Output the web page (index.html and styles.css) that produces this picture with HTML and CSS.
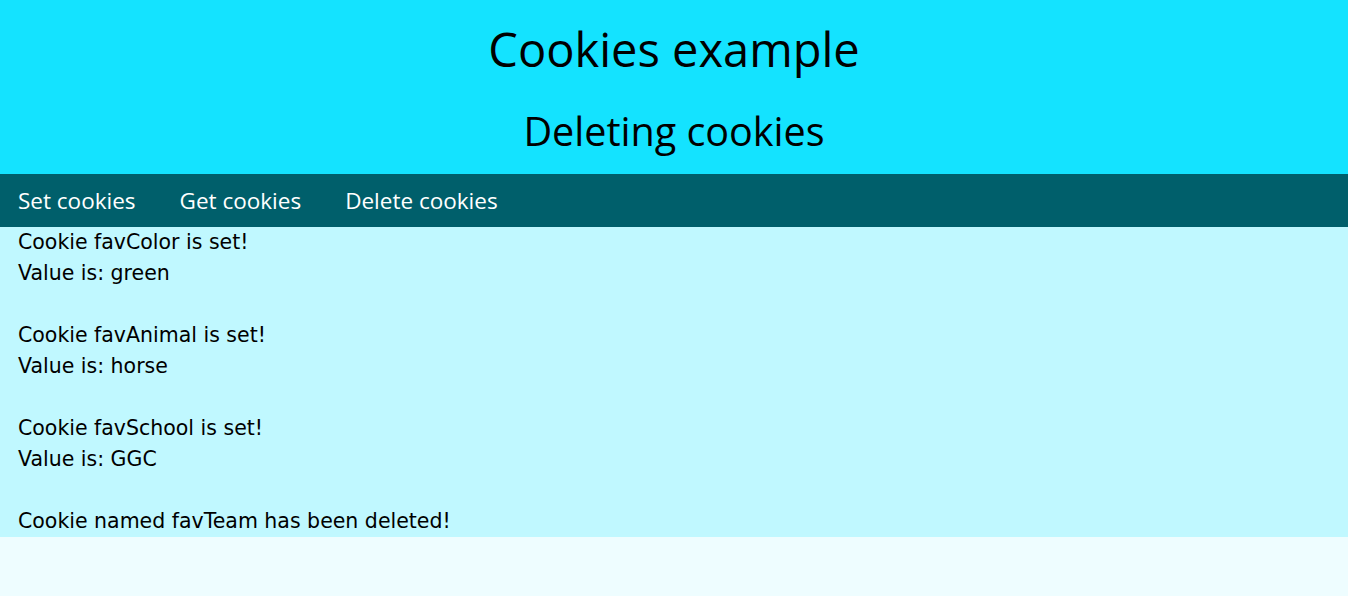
FILE: index.html
```html
<!DOCTYPE html>
<html lang="en">
<head>
<meta charset="utf-8">
<title>Cookies example</title>
<link rel="stylesheet" href="styles.css">
</head>
<body>
<header class="masthead">
  <h1 class="title">Cookies example</h1>
  <h2 class="subtitle">Deleting cookies</h2>
</header>
<nav class="menu">
  <a class="menu-link" href="#">Set cookies</a>
  <a class="menu-link" href="#">Get cookies</a>
  <a class="menu-link" href="#">Delete cookies</a>
</nav>
<main class="content">
  Cookie favColor is set!<br>
  Value is: green<br><br>
  Cookie favAnimal is set!<br>
  Value is: horse<br><br>
  Cookie favSchool is set!<br>
  Value is: GGC<br><br>
  Cookie named favTeam has been deleted!
</main>
</body>
</html>
```
FILE: styles.css
```css
html, body {
  margin: 0;
  padding: 0;
}
body {
  background: #eefdff;
  font-family: "DejaVu Sans", Verdana, sans-serif;
  color: #000;
}
.masthead {
  background: #14e3ff;
  height: 174px;
  text-align: center;
  font-family: "Open Sans", "Noto Sans", sans-serif;
  display: flex;
  flex-direction: column;
  align-items: center;
}
.title {
  margin: 19px 0 0;
  font-size: 47px;
  font-weight: 400;
  line-height: 60px;
}
.subtitle {
  margin: 28px 0 0;
  font-size: 39.5px;
  font-weight: 400;
  line-height: 48px;
}
.menu {
  background: #005f6b;
  height: 53px;
  display: flex;
  align-items: center;
  gap: 44px;
  padding: 0 18px;
  font-family: "Open Sans", "Noto Sans", sans-serif;
}
.menu-link {
  color: #fff;
  text-decoration: none;
  font-size: 22.5px;
}
.content {
  background: #c0f8ff;
  padding: 0 18px;
  font-size: 20.5px;
  line-height: 31px;
}
```
